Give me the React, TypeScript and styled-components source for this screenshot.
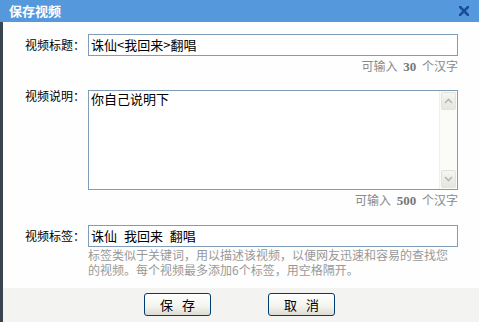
import { createGlobalStyle, styled } from "styled-components";

const Global = createGlobalStyle`
  html, body {
    margin: 0;
    padding: 0;
    background: #fdfefd;
  }
  body {
    font-family: "Noto Sans CJK SC", "DejaVu Sans", sans-serif;
    font-size: 12px;
    color: #000;
  }
`;

const CloseIcon = () => (
  <svg width="10" height="10" viewBox="0 0 10 10">
    <path d="M1 1 L9 9 M9 1 L1 9" stroke="#1a4c9c" strokeWidth="2.6" strokeLinecap="square" />
  </svg>
);

const Chevron = ({ up }: { up?: boolean }) => (
  <svg width="9" height="6" viewBox="0 0 9 6">
    <path
      d={up ? "M1 5 L4.5 1.5 L8 5" : "M1 1 L4.5 4.5 L8 1"}
      stroke="#b4b8ae"
      strokeWidth="1.6"
      fill="none"
    />
  </svg>
);

export default function App() {
  return (
    <Dialog>
      <Global />
      <TitleBar>
        <Title>保存视频</Title>
        <Close>
          <CloseIcon />
        </Close>
      </TitleBar>
      <Body>
        <Row>
          <Label>视频标题：</Label>
          <Field>诛仙&lt;我回来&gt;翻唱</Field>
        </Row>
        <Hint>
          可输入 <b>30</b> 个汉字
        </Hint>
        <Row $top $gap={17}>
          <Label>视频说明：</Label>
          <AreaBox>
            <AreaText>你自己说明下</AreaText>
            <ScrollBar>
              <ScrollButton>
                <Chevron up />
              </ScrollButton>
              <ScrollTrack />
              <ScrollButton>
                <Chevron />
              </ScrollButton>
            </ScrollBar>
          </AreaBox>
        </Row>
        <Hint>
          可输入 <b>500</b> 个汉字
        </Hint>
        <Row $gap={18}>
          <Label>视频标签：</Label>
          <Field>诛仙 我回来 翻唱</Field>
        </Row>
        <Help>
          标签类似于关键词，用以描述该视频，以便网友迅速和容易的查找您的视频。每个视频最多添加6个标签，用空格隔开。
        </Help>
      </Body>
      <Footer>
        <Button>保存</Button>
        <Button>取消</Button>
      </Footer>
    </Dialog>
  );
}

const Dialog = styled.div`
  width: 479px;
  height: 322px;
  display: flex;
  flex-direction: column;
  overflow: hidden;
`;

const TitleBar = styled.div`
  height: 22px;
  background: #5599dc;
  display: flex;
  align-items: center;
  justify-content: space-between;
  padding: 0 10px 2px 9px;
  box-sizing: border-box;
`;

const Title = styled.div`
  color: #fff;
  font-size: 13px;
  font-weight: bold;
`;

const Close = styled.div`
  display: flex;
  margin-top: 2px;
`;

const Body = styled.div`
  flex: 1;
  border-left: 3px solid #3a4350;
  padding: 12px 0 0 22px;
  background: #fdfefd;
`;

const Row = styled.div<{ $top?: boolean; $gap?: number }>`
  display: flex;
  align-items: ${(p) => (p.$top ? "flex-start" : "center")};
  margin-top: ${(p) => p.$gap ?? 0}px;
`;

const Label = styled.div`
  width: 63px;
  font-size: 12px;
  line-height: 12px;
  flex-shrink: 0;
`;

const Field = styled.div`
  width: 370px;
  height: 22px;
  box-sizing: border-box;
  border: 1px solid #7f9db9;
  background: #fff;
  padding: 0 2px;
  font-size: 13px;
  line-height: 20px;
  word-spacing: 4px;
`;

const AreaBox = styled.div`
  width: 370px;
  height: 100px;
  box-sizing: border-box;
  border: 1px solid #7f9db9;
  background: #fff;
  display: flex;
`;

const AreaText = styled.div`
  flex: 1;
  padding: 0 2px;
  font-size: 13px;
  line-height: 16px;
`;

const ScrollBar = styled.div`
  width: 17px;
  display: flex;
  flex-direction: column;
  padding: 1px 0;
  background: #fbfbf8;
  border-left: 1px solid #f0f0ea;
`;

const ScrollButton = styled.div`
  height: 16px;
  margin: 0 1px;
  border: 1px solid #e3e3dc;
  border-radius: 2px;
  background: linear-gradient(#f6f6f2, #e6e6de);
  display: flex;
  align-items: center;
  justify-content: center;
`;

const ScrollTrack = styled.div`
  flex: 1;
`;

const Hint = styled.div`
  width: 433px;
  margin-top: 4px;
  text-align: right;
  color: #8a8a8a;
  font-size: 12px;
  line-height: 12px;
  word-spacing: 3px;
  b {
    font-family: "Liberation Serif", serif;
    font-size: 13px;
    color: #777;
  }
`;

const Help = styled.div`
  width: 370px;
  margin: 0 0 0 63px;
  color: #999;
  font-size: 12px;
  line-height: 15px;
`;

const Footer = styled.div`
  height: 34px;
  border-left: 3px solid #3a4350;
  background: #f3f3f2;
  display: flex;
  justify-content: center;
  align-items: flex-start;
  gap: 57px;
  padding: 5px 3px 0 0;
  box-sizing: border-box;
`;

const Button = styled.div`
  width: 67px;
  height: 23px;
  box-sizing: border-box;
  border: 1px solid #003c74;
  border-radius: 3px;
  background: linear-gradient(#ffffff, #f3f3ee 60%, #dcdcd2);
  display: flex;
  align-items: center;
  justify-content: center;
  font-size: 13px;
  letter-spacing: 9px;
  padding-left: 9px;
`;
